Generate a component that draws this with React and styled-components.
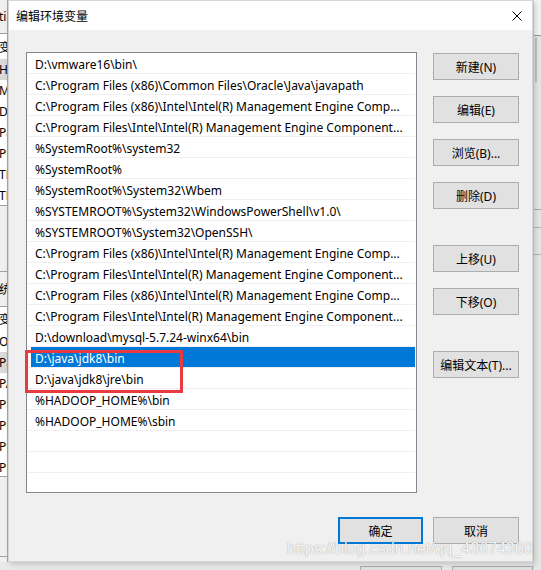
import React from "react";
import styled, { createGlobalStyle } from "styled-components";

const Global = createGlobalStyle`
  html, body { margin: 0; padding: 0; background: #f0f0f0; }
  body { font-family: "Noto Sans", "Noto Sans CJK SC", sans-serif; }
  * { box-sizing: border-box; }
`;

const UI_FONT = `"Noto Sans", "Noto Sans CJK SC", sans-serif`;

const Page = styled.div`
  position: relative;
  width: 541px;
  height: 570px;
  overflow: hidden;
  display: grid;
  grid-template-columns: 8px 525px 1fr;
  grid-template-rows: 562px 1fr;
  background: #ececec;
`;

/* ---------- window behind the dialog ---------- */

const LeftPeek = styled.div`
  grid-column: 1;
  grid-row: 1;
  display: flex;
  flex-direction: column;
  background: #f0f0f0;
  border-right: 1px solid #a8a8a8;
  overflow: hidden;
  font-family: ${UI_FONT};
  font-size: 12px;
  color: #000;
`;

const PeekBlock = styled.div`
  height: ${(p) => p.$h}px;
  flex: none;
  background: ${(p) => p.$bg || "transparent"};
  border-bottom: ${(p) => (p.$line ? "1px solid #a0a0a0" : "none")};
  display: flex;
  flex-direction: column;
`;

const PeekRow = styled.div`
  height: ${(p) => p.$h || 21}px;
  flex: none;
  display: flex;
  align-items: center;
  white-space: nowrap;
  margin-left: -1px;
  background: ${(p) => (p.$hl ? "#d9d9d9" : "transparent")};
`;

const RightPeek = styled.div`
  grid-column: 3;
  grid-row: 1 / span 2;
  display: flex;
  flex-direction: column;
  background: #e6e6e6;
  border-left: 1px solid #d4d4d4;
`;

const RightBand = styled.div`
  height: ${(p) => p.$h}px;
  flex: none;
  background: ${(p) => p.$bg || "transparent"};
  border-bottom: ${(p) => (p.$line ? `1px solid ${p.$line}` : "none")};
  display: flex;
`;

const ScrollThumb = styled.div`
  width: 2px;
  height: 44px;
  margin: 2px 0 0 1px;
  background: #c2c2c2;
`;

const BottomPeek = styled.div`
  grid-column: 1 / span 2;
  grid-row: 2;
  display: flex;
  gap: 10px;
  padding: 4px 0 0 360px;
  background: #e9e9e9;
`;

const PeekButton = styled.div`
  width: 86px;
  height: 20px;
  background: #e1e1e1;
  border: 1px solid #adadad;
`;

/* ---------- dialog ---------- */

const Dialog = styled.div`
  grid-column: 2;
  grid-row: 1;
  display: flex;
  flex-direction: column;
  background: #f0f0f0;
  border: 1px solid #d6d6d6;
  box-shadow: 2px 2px 6px rgba(0, 0, 0, 0.18);
  font-family: ${UI_FONT};
  font-size: 12px;
  color: #000;
  z-index: 1;
`;

const TitleBar = styled.div`
  height: 29px;
  flex: none;
  background: #fff;
  display: flex;
  align-items: center;
  justify-content: space-between;
  padding: 0 10px 0 7px;
`;

const Title = styled.span`
  font-size: 12px;
  letter-spacing: 0;
`;

const CloseGlyph = styled.svg`
  width: 10px;
  height: 10px;
  display: block;
`;

const Body = styled.div`
  flex: 1;
  display: flex;
  flex-direction: column;
  padding: 22px 13px 0 17px;
`;

const Main = styled.div`
  display: flex;
  gap: 16px;
  align-items: flex-start;
`;

const ListBox = styled.div`
  position: relative;
  width: 391px;
  height: 441px;
  flex: none;
  background: #fff;
  border: 1px solid #828790;
  padding: 0 1px;
`;

const Row = styled.div`
  height: 21px;
  display: flex;
  align-items: center;
  padding: 2px 0 0 7px;
  border-bottom: 1px solid #f0f0f0;
  white-space: nowrap;
  overflow: hidden;
  color: ${(p) => (p.$selected ? "#fff" : "#000")};
  background: ${(p) =>
    p.$selected
      ? "linear-gradient(to right, transparent 3px, #0078d7 3px)"
      : "transparent"};
`;

const Highlight = styled.div`
  position: absolute;
  left: -2px;
  top: 297px;
  width: 158px;
  height: 43px;
  border: 3px solid #e93b3f;
  pointer-events: none;
`;

const ButtonColumn = styled.div`
  width: 86px;
  flex: none;
  display: flex;
  flex-direction: column;
  gap: 16px;
  padding-top: 1px;
`;

const Button = styled.button`
  width: ${(p) => p.$w || 86}px;
  height: 27px;
  flex: none;
  margin-top: ${(p) => (p.$gapAbove ? 20 : 0)}px;
  background: #e1e1e1;
  border: ${(p) => (p.$primary ? "2px solid #0078d7" : "1px solid #adadad")};
  border-radius: 0;
  padding: 0;
  font-family: ${UI_FONT};
  font-size: 12px;
  color: #000;
  display: flex;
  align-items: center;
  justify-content: center;
`;

const Footer = styled.div`
  display: flex;
  justify-content: flex-end;
  gap: 10px;
  margin-top: 24px;
`;

const Watermark = styled.div`
  position: absolute;
  left: 287px;
  top: 540px;
  z-index: 2;
  font-family: "Liberation Sans", Arial, sans-serif;
  font-size: 16px;
  color: rgba(255, 255, 255, 0.92);
  text-shadow: 0 0 1px rgba(0, 0, 0, 0.3), 0 0 2px rgba(0, 0, 0, 0.12);
  white-space: nowrap;
`;

const paths = [
  "D:\\vmware16\\bin\\",
  "C:\\Program Files (x86)\\Common Files\\Oracle\\Java\\javapath",
  "C:\\Program Files (x86)\\Intel\\Intel(R) Management Engine Comp...",
  "C:\\Program Files\\Intel\\Intel(R) Management Engine Component...",
  "%SystemRoot%\\system32",
  "%SystemRoot%",
  "%SystemRoot%\\System32\\Wbem",
  "%SYSTEMROOT%\\System32\\WindowsPowerShell\\v1.0\\",
  "%SYSTEMROOT%\\System32\\OpenSSH\\",
  "C:\\Program Files (x86)\\Intel\\Intel(R) Management Engine Comp...",
  "C:\\Program Files\\Intel\\Intel(R) Management Engine Component...",
  "C:\\Program Files (x86)\\Intel\\Intel(R) Management Engine Comp...",
  "C:\\Program Files\\Intel\\Intel(R) Management Engine Component...",
  "D:\\download\\mysql-5.7.24-winx64\\bin",
  "D:\\java\\jdk8\\bin",
  "D:\\java\\jdk8\\jre\\bin",
  "%HADOOP_HOME%\\bin",
  "%HADOOP_HOME%\\sbin",
  "",
  "",
];

const SELECTED = 14;

const sideButtons = [
  { label: "新建(N)" },
  { label: "编辑(E)" },
  { label: "浏览(B)..." },
  { label: "删除(D)" },
  { label: "上移(U)", gapAbove: true },
  { label: "下移(O)" },
  { label: "编辑文本(T)...", gapAbove: true },
];

const upperPeek = ["HA", "M", "Di", "Pa", "PE", "TE", "TM"];
const lowerPeek = ["OS", "Pa", "PA", "PF", "PF", "PF", "PF"];

export default function App() {
  return (
    <>
      <Global />
      <Page>
        <LeftPeek>
          <PeekBlock $h={34} $line>
            <PeekRow $h={33}>tir</PeekRow>
          </PeekBlock>
          <PeekBlock $h={172} $bg="#fff" $line>
            <PeekRow $h={25}>变</PeekRow>
            {upperPeek.map((t, i) => (
              <PeekRow key={i} $hl={i === 0}>
                {t}
              </PeekRow>
            ))}
          </PeekBlock>
          <PeekBlock $h={66} $line />
          <PeekBlock $h={35} $line>
            <PeekRow $h={34}>统</PeekRow>
          </PeekBlock>
          <PeekBlock $h={170} $bg="#fff" $line>
            <PeekRow $h={24}>变</PeekRow>
            {lowerPeek.map((t, i) => (
              <PeekRow key={i} $hl={i === 1}>
                {t}
              </PeekRow>
            ))}
          </PeekBlock>
          <PeekBlock $h={80} $line />
        </LeftPeek>

        <Dialog>
          <TitleBar>
            <Title>编辑环境变量</Title>
            <CloseGlyph viewBox="0 0 10 10">
              <path d="M0.5 0.5 L9.5 9.5 M9.5 0.5 L0.5 9.5" stroke="#000" strokeWidth="1" fill="none" />
            </CloseGlyph>
          </TitleBar>
          <Body>
            <Main>
              <ListBox>
                {paths.map((p, i) => (
                  <Row key={i} $selected={i === SELECTED}>
                    {p}
                  </Row>
                ))}
                <Highlight />
              </ListBox>
              <ButtonColumn>
                {sideButtons.map((b) => (
                  <Button key={b.label} $gapAbove={b.gapAbove}>
                    {b.label}
                  </Button>
                ))}
              </ButtonColumn>
            </Main>
            <Footer>
              <Button $primary $w={85}>确定</Button>
              <Button>取消</Button>
            </Footer>
          </Body>
        </Dialog>

        <RightPeek>
          <RightBand $h={36} $bg="#f3f3f3" $line="#9a9a9a" />
          <RightBand $h={174} $line="#a8a8a8">
            <ScrollThumb />
          </RightBand>
          <RightBand $h={18} $line="#b4b4b4" />
          <RightBand $h={27} $line="#b4b4b4" />
          <RightBand $h={315} />
        </RightPeek>

        <BottomPeek>
          <PeekButton />
          <PeekButton />
        </BottomPeek>

        <Watermark>https://blog.csdn.net/qq_43674360</Watermark>
      </Page>
    </>
  );
}
